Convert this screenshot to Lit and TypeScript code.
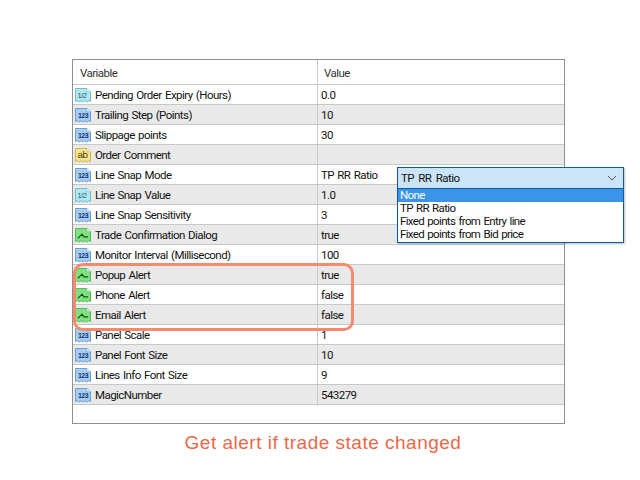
import { LitElement, html, css, svg } from "lit";
import { customElement } from "lit/decorators.js";

type Kind = "num" | "dbl" | "str" | "bool";
const rows: [Kind, string, string][] = [
  ["dbl", "Pending Order Expiry (Hours)", "0.0"],
  ["num", "Trailing Step (Points)", "10"],
  ["num", "Slippage points", "30"],
  ["str", "Order Comment", ""],
  ["num", "Line Snap Mode", "TP RR Ratio"],
  ["dbl", "Line Snap Value", "1.0"],
  ["num", "Line Snap Sensitivity", "3"],
  ["bool", "Trade Confirmation Dialog", "true"],
  ["num", "Monitor Interval (Millisecond)", "100"],
  ["bool", "Popup Alert", "true"],
  ["bool", "Phone Alert", "false"],
  ["bool", "Email Alert", "false"],
  ["num", "Panel Scale", "1"],
  ["num", "Panel Font Size", "10"],
  ["num", "Lines Info Font Size", "9"],
  ["num", "MagicNumber", "543279"],
];

const pal: Record<Kind, [string, string, string]> = {
  num: ["#a9cdf0", "#5f9bd3", "#0f3474"],
  dbl: ["#b4e6ee", "#62bccd", "#0f6078"],
  str: ["#f7e58e", "#cdb04a", "#4a3c08"],
  bool: ["#7fe07f", "#4fb85a", "#14501a"],
};

function icon(k: Kind) {
  const [fill, line, ink] = pal[k];
  const body = "M.5 .5H12.5L16.5 4V14.5L14.5 13.5L12.5 15L10.5 13.5L8.5 15L6.5 13.5L4.5 15L2.5 13.5L.5 14.5Z";
  const mark =
    k === "bool"
      ? svg`<path d="M3 11L7.5 6.5L9.5 9.5H14" fill="none" stroke="${ink}" stroke-width="1.2"/>`
      : k === "str"
      ? svg`<text x="8" y="11" text-anchor="middle" font-family="Liberation Sans, sans-serif" font-size="10.5" fill="${ink}">ab</text>`
      : k === "num"
      ? svg`<text x="8.5" y="11" text-anchor="middle" font-family="Liberation Sans, sans-serif" font-weight="700" font-size="7.5" fill="${ink}">123</text>`
      : svg`<text x="7.5" y="10.5" text-anchor="middle" font-family="Liberation Sans, sans-serif" font-size="8" fill="${ink}">1/2</text>`;
  return html`<svg class="icon" width="16" height="15" viewBox="0 0 17 16">
    <path d="${body}" fill="${fill}" stroke="${line}"/>
    <path d="M12.5 .5V4H16.5" fill="#fff" stroke="${line}" stroke-width=".7"/>
    ${mark}
  </svg>`;
}

@customElement("app-root")
export class AppRoot extends LitElement {
  static styles = css`
    :host {
      display: block;
      width: 640px;
      height: 480px;
      background: #fff;
      font-family: Roboto, "Liberation Sans", Arial, sans-serif;
      font-size: 11.5px;
      letter-spacing: -0.55px;
      word-spacing: 1px;
      color: #111;
      overflow: hidden;
    }
    .page {
      display: flex;
      flex-direction: column;
      align-items: flex-start;
      padding: 59px 0 0 72px;
    }
    .frame {
      position: relative;
      box-sizing: border-box;
      width: 493px;
      height: 365px;
      border: 1px solid #8f8f8f;
    }
    .row {
      display: grid;
      grid-template-columns: 244px 1fr;
      height: 20px;
      box-sizing: border-box;
      border-bottom: 1px solid #c8c8c8;
      line-height: 21px;
    }
    .row.alt {
      background: #e9e9e9;
    }
    .head {
      height: 25px;
      line-height: 26px;
      border-bottom: 1px solid #c8c8c8;
      color: #333;
    }
    .head .val, .row .val {
      border-left: 1px solid #c8c8c8;
      padding-left: 3px;
    }
    .head .var {
      padding-left: 7px;
    }
    .head .val {
      padding-left: 6px;
    }
    .var {
      display: flex;
      align-items: center;
      gap: 4px;
      padding-left: 2px;
      white-space: nowrap;
    }
    .icon {
      flex: none;
    }
    .combo {
      position: absolute;
      left: 324px;
      top: 107px;
      width: 227px;
      box-sizing: border-box;
      border: 1px solid #0f5a9a;
      background: #fff;
      box-shadow: 1px 1px 2px rgba(0, 0, 0, 0.25);
    }
    .combo-top {
      display: flex;
      justify-content: space-between;
      align-items: center;
      height: 20px;
      padding: 0 6px 0 3px;
      background: #cce4f7;
      border-bottom: 1px solid #0f5a9a;
      word-spacing: 2px;
    }
    .opt {
      height: 13px;
      line-height: 13px;
      padding-left: 2px;
      white-space: nowrap;
      letter-spacing: -0.65px;
    }
    .opt.sel {
      background: #3a94e8;
      color: #fff;
    }
    .list {
      padding-bottom: 1px;
    }
    .mark {
      position: absolute;
      left: 0;
      top: 203px;
      width: 281px;
      height: 68px;
      box-sizing: border-box;
      border: 3px solid #f58a6c;
      border-radius: 10px;
      pointer-events: none;
    }
    .caption {
      width: 502px;
      margin-top: 7px;
      text-align: center;
      font-family: "Liberation Sans", Arial, sans-serif;
      font-size: 19px;
      line-height: 24px;
      letter-spacing: 0.5px;
      word-spacing: 0;
      color: #e8694a;
    }
  `;

  render() {
    return html`<div class="page">
      <div class="frame">
        <div class="row head"><div class="var">Variable</div><div class="val">Value</div></div>
        ${rows.map(
          ([k, n, v], i) => html`<div class="row ${i % 2 ? "alt" : ""}">
            <div class="var">${icon(k)}<span>${n}</span></div>
            <div class="val">${v}</div>
          </div>`
        )}
        <div class="combo">
          <div class="combo-top">
            <span>TP RR Ratio</span>
            <svg width="10" height="6" viewBox="0 0 10 6"><path d="M1 1L5 5L9 1" fill="none" stroke="#555" stroke-width="1"/></svg>
          </div>
          <div class="list">
            <div class="opt sel">None</div>
            <div class="opt">TP RR Ratio</div>
            <div class="opt">Fixed points from Entry line</div>
            <div class="opt">Fixed points from Bid price</div>
          </div>
        </div>
        <div class="mark"></div>
      </div>
      <div class="caption">Get alert if trade state changed</div>
    </div>`;
  }
}
